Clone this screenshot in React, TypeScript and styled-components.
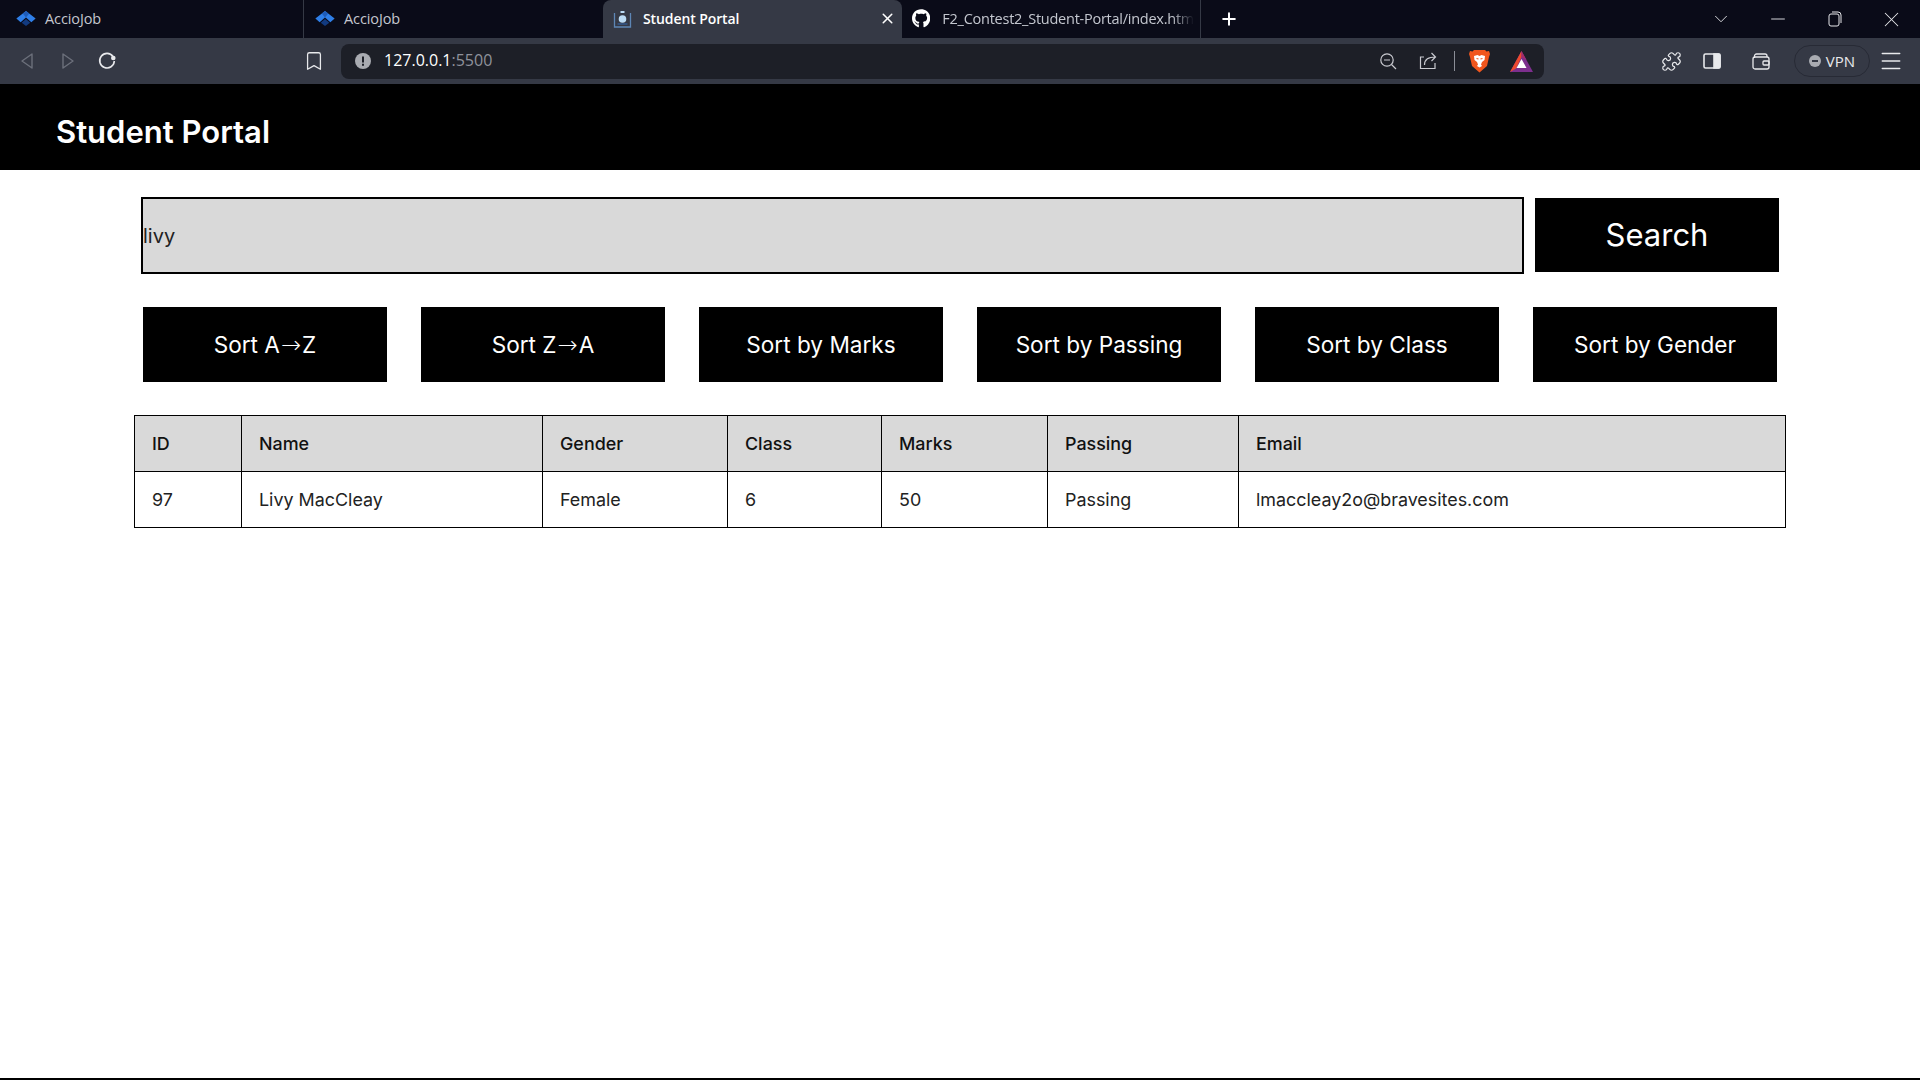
import React from 'react';
import styled, { createGlobalStyle } from 'styled-components';
import { FaGithub } from 'react-icons/fa';
import { Bookmark, ChevronDown, Menu, Minus, Plus, Puzzle, X } from 'lucide-react';

const GlobalStyle = createGlobalStyle`
  * {
    box-sizing: border-box;
  }
  body {
    margin: 0;
    background: #fff;
    font-family: 'Inter', sans-serif;
  }
`;

const Page = styled.div`
  display: flex;
  flex-direction: column;
  height: 1080px;
  overflow: hidden;
  border-bottom: 2px solid #000;
`;

/* browser chrome */
const TabStrip = styled.div`
  display: flex;
  align-items: stretch;
  height: 38px;
  background: #0a0b18;
  font-family: 'Open Sans', sans-serif;
  font-size: 14.5px;
`;

const Tab = styled.div<{
  $active?: boolean;
  $width: number;
  $inset: number;
  $gap: number;
  $divider?: boolean;
}>`
  display: flex;
  align-items: center;
  gap: ${(p) => p.$gap}px;
  width: ${(p) => p.$width}px;
  padding: 0 6px 1px ${(p) => p.$inset}px;
  color: ${(p) => (p.$active ? '#fff' : '#c4c7cf')};
  font-size: ${(p) => (p.$active ? '14px' : '14.5px')};
  font-weight: ${(p) => (p.$active ? 600 : 400)};
  background: ${(p) => (p.$active ? '#353945' : 'transparent')};
  border-radius: ${(p) => (p.$active ? '8px 8px 0 0' : '0')};
  border-right: ${(p) => (p.$divider ? '1px solid #353945' : 'none')};
  white-space: nowrap;
  overflow: hidden;
`;

const TabTitle = styled.span<{ $fade?: boolean }>`
  flex: 1;
  letter-spacing: ${(p) => (p.$fade ? '-0.25px' : '-0.1px')};
  ${(p) =>
    p.$fade &&
    'mask-image: linear-gradient(to right, #000 calc(100% - 22px), transparent);'}
`;

const NewTab = styled.div`
  display: flex;
  align-items: center;
  padding-left: 18px;
  color: #fff;
`;

const WindowControls = styled.div`
  display: flex;
  margin-left: auto;
  color: #e6e7ea;
`;

const WindowButton = styled.div`
  display: flex;
  align-items: center;
  justify-content: center;
  width: 57px;
`;

const Toolbar = styled.div`
  display: flex;
  align-items: center;
  height: 46px;
  background: #353945;
  color: #e8e9ec;
`;

const NavGroup = styled.div`
  display: flex;
  align-items: center;
  width: 303px;
  padding-left: 20px;
`;

const BookmarkSlot = styled.div`
  display: flex;
  width: 38px;
`;

const AddressBar = styled.div`
  display: flex;
  align-items: center;
  width: 1203px;
  height: 35px;
  padding: 0 11px 0 14px;
  border-radius: 8px;
  background: #1d1f27;
  font-family: 'Open Sans', sans-serif;
  font-size: 16px;
`;

const UrlHost = styled.span`
  margin-left: 13px;
  padding-bottom: 2px;
  color: #fff;
`;

const UrlPort = styled.span`
  padding-bottom: 2px;
  color: #8f929b;
`;

const AddressActions = styled.div`
  display: flex;
  align-items: center;
  margin-left: auto;
`;

const Slot = styled.div<{ $gap?: number }>`
  display: flex;
  margin-right: ${(p) => p.$gap ?? 0}px;
`;

const Separator = styled.div`
  width: 1px;
  height: 20px;
  margin-right: 14px;
  background: #8b8e97;
`;

const ToolbarRight = styled.div`
  display: flex;
  align-items: center;
  flex: 1;
  padding-left: 117px;
`;

const VpnPill = styled.div`
  display: flex;
  align-items: center;
  justify-content: center;
  gap: 5px;
  width: 76px;
  height: 32px;
  margin-right: 8px;
  padding-bottom: 1px;
  border: 1px solid #272a35;
  border-radius: 16px;
  font-family: 'Open Sans', sans-serif;
  font-size: 15px;
`;

/* page content */
const Header = styled.header`
  display: flex;
  align-items: center;
  height: 86px;
  padding: 9px 0 0 56px;
  background: #000;
  color: #fff;
  font-size: 31px;
  font-weight: 600;
`;

const Content = styled.main`
  display: flex;
  flex-direction: column;
  padding: 27px 135px 0 134px;
`;

const SearchRow = styled.div`
  display: flex;
  align-items: center;
  gap: 11px;
  padding-left: 7px;
`;

const SearchInput = styled.input`
  width: 1383px;
  height: 77px;
  padding: 0;
  border: 2px solid #000;
  background: #d9d9d9;
  color: #222;
  font-family: 'Inter', sans-serif;
  font-size: 20px;
  outline: none;
`;

const SearchButton = styled.button`
  width: 244px;
  height: 74px;
  margin-bottom: 2px;
  border: none;
  background: #000;
  color: #fff;
  font-family: 'Inter', sans-serif;
  font-size: 31px;
`;

const SortRow = styled.div`
  display: flex;
  gap: 34px;
  margin-top: 33px;
  padding-left: 9px;
`;

const SortButton = styled.button`
  width: 244px;
  height: 75px;
  border: none;
  background: #000;
  color: #fff;
  font-family: 'Inter', sans-serif;
  font-size: 22.6px;
`;

const Arrow = styled.span`
  margin: 0 1px;
  font-family: 'DejaVu Sans', sans-serif;
  font-size: 24px;
  font-weight: 200;
  line-height: 0;
`;

const StudentTable = styled.table`
  width: 1651px;
  margin-top: 33px;
  border-collapse: collapse;
  table-layout: fixed;
  font-size: 17.9px;
  color: #222;
`;

const Th = styled.th`
  height: 56px;
  padding: 0 17px;
  border: 1px solid #000;
  background: #d9d9d9;
  color: #111;
  text-align: left;
  font-weight: 500;
`;

const Td = styled.td`
  height: 56px;
  padding: 0 17px;
  border: 1px solid #000;
`;

const Icon = styled.svg.attrs({ fill: 'none', stroke: 'currentColor' })`
  display: block;
  flex-shrink: 0;
`;

const AccioLogo = () => (
  <svg width="20" height="15" viewBox="0 0 18 14">
    <path d="M9 7.500l4 3.500-4 3-4-3z" fill="#123a80" />
    <path d="M9 0l9 7-4 3.500-5-4.500-5 4.500-4-3.500z" fill="#2f7fe8" />
    <path d="M9 0l3 2.300L9 6 6 2.300z" fill="#1f5cb8" />
  </svg>
);

const PortalLogo = () => (
  <svg width="21" height="22" viewBox="0 0 20 22" fill="none">
    <path d="M2 5v14h16V5" stroke="#5d86b5" strokeWidth="1.3" />
    <path d="M8 3h4v2H8z" fill="#bcdcf5" />
    <circle cx="10" cy="11" r="3.800" fill="#bcdcf5" />
    <path d="M5 15h10v2H5z" fill="#33507a" />
  </svg>
);

const BraveLogo = () => (
  <svg width="21" height="24" viewBox="0 0 21 24">
    <path d="M5 1h11l1.500 1.500L20 2l1 3-1 3-2 9-7.500 6.500L3 17 1 8 0 5l1-3 2.500.5z" fill="#f1561d" />
    <path d="M5 7l3.500-1 2 1 2-1L16 7l-.5 4-2.500 2-1 2.500 1 1.500-2.500 1.500L8 17l1-1.500L8 13l-2.500-2z" fill="#fff" />
    <path d="M7.500 9.500L9.500 10M13.500 9.500L11.500 10" stroke="#f1561d" strokeWidth="1.2" />
  </svg>
);

const BatLogo = () => (
  <svg width="23" height="21" viewBox="0 0 23 21">
    <path d="M11.500 0L23 21H0z" fill="#7d2f8e" />
    <path d="M11.500 0L0 21l6-3.500L11.500 6z" fill="#ee4a2e" />
    <path d="M11.500 0l5 9-5-3z" fill="#a32c6a" />
    <path d="M11.500 8l5 9h-10z" fill="#fff" />
  </svg>
);

const columns = [
  { label: 'ID', width: 107, value: '97' },
  { label: 'Name', width: 301, value: 'Livy MacCleay' },
  { label: 'Gender', width: 185, value: 'Female' },
  { label: 'Class', width: 154, value: '6' },
  { label: 'Marks', width: 166, value: '50' },
  { label: 'Passing', width: 191, value: 'Passing' },
  { label: 'Email', width: 547, value: 'lmaccleay2o@bravesites.com' },
];

const sortLabels = [
  ['Sort A', 'Z'],
  ['Sort Z', 'A'],
  ['Sort by Marks'],
  ['Sort by Passing'],
  ['Sort by Class'],
  ['Sort by Gender'],
];

const App = () => {
  return (
    <Page>
      <GlobalStyle />
      <TabStrip>
        <Tab $width={304} $inset={16} $gap={9} $divider>
          <AccioLogo />
          <TabTitle>AccioJob</TabTitle>
        </Tab>
        <Tab $width={299} $inset={11} $gap={9}>
          <AccioLogo />
          <TabTitle>AccioJob</TabTitle>
        </Tab>
        <Tab $active $width={299} $inset={9} $gap={10}>
          <PortalLogo />
          <TabTitle>Student Portal</TabTitle>
          <X size={17} strokeWidth={2.2} />
        </Tab>
        <Tab $width={299} $inset={10} $gap={12} $divider>
          <FaGithub size={23} color="#fff" />
          <TabTitle $fade>F2_Contest2_Student-Portal/index.htm</TabTitle>
        </Tab>
        <NewTab>
          <Plus size={20} strokeWidth={2.4} />
        </NewTab>
        <WindowControls>
          <WindowButton>
            <ChevronDown size={22} strokeWidth={1} />
          </WindowButton>
          <WindowButton>
            <Minus size={22} strokeWidth={1} />
          </WindowButton>
          <WindowButton>
            <Icon width="14" height="16" viewBox="0 0 14 16">
              <rect x="1" y="3" width="10" height="12" rx="2" />
              <path d="M4 1h6a3 3 0 0 1 3 3v8" />
            </Icon>
          </WindowButton>
          <WindowButton>
            <X size={25} strokeWidth={1} />
          </WindowButton>
        </WindowControls>
      </TabStrip>
      <Toolbar>
        <NavGroup>
          <Slot $gap={27}>
            <Icon width="14" height="18" viewBox="0 0 14 18" color="#6c707b" strokeWidth="1.4">
              <path d="M12 2L2 9l10 7z" strokeLinejoin="round" />
            </Icon>
          </Slot>
          <Slot $gap={23}>
            <Icon width="14" height="18" viewBox="0 0 14 18" color="#6c707b" strokeWidth="1.4">
              <path d="M2 2l10 7-10 7z" strokeLinejoin="round" />
            </Icon>
          </Slot>
          <Icon width="18" height="18" viewBox="0 0 18 18" strokeWidth="1.6">
            <path d="M15 4.500A7.300 7.300 0 1 0 16.300 9" />
            <circle cx="15.300" cy="6" r="1.500" fill="currentColor" />
          </Icon>
        </NavGroup>
        <BookmarkSlot>
          <Bookmark size={22} strokeWidth={1.4} />
        </BookmarkSlot>
        <AddressBar>
          <svg width="16" height="16" viewBox="0 0 16 16">
            <circle cx="8" cy="8" r="8" fill="#a9abb1" />
            <path d="M7 3.500h2v6H7zM7 10.700h2v2H7z" fill="#1d1f27" />
          </svg>
          <UrlHost>127.0.0.1</UrlHost>
          <UrlPort>:5500</UrlPort>
          <AddressActions>
            <Slot $gap={22}>
              <Icon width="18" height="18" viewBox="0 0 18 18" strokeWidth="1.2" color="#c9cad0">
                <circle cx="8" cy="8" r="6.200" />
                <path d="M5 8h6M12.500 12.500l4.500 4.500" />
              </Icon>
            </Slot>
            <Slot $gap={17}>
              <Icon width="18" height="18" viewBox="0 0 18 18" strokeWidth="1.2" color="#c9cad0">
                <path d="M5 5H1.500v11.500H16V11" />
                <path d="M5.500 13c0-6 4-8 11-8M12.500 1l4 4-4 4" />
              </Icon>
            </Slot>
            <Separator />
            <Slot $gap={20}>
              <BraveLogo />
            </Slot>
            <BatLogo />
          </AddressActions>
        </AddressBar>
        <ToolbarRight>
          <Slot $gap={21}>
            <Puzzle size={21} strokeWidth={1.4} />
          </Slot>
          <Slot $gap={31}>
            <Icon width="18" height="16" viewBox="0 0 18 16" strokeWidth="1.6">
              <rect x="1" y="1" width="16" height="14" rx="1.500" />
              <path d="M11 1h4.500A1.500 1.500 0 0 1 17 2.500v11a1.500 1.500 0 0 1-1.500 1.500H11z" fill="currentColor" />
            </Icon>
          </Slot>
          <Slot $gap={24}>
            <Icon width="18" height="17" viewBox="0 0 18 17" strokeWidth="1.3">
              <path d="M2.500 5V3a2 2 0 0 1 2-2H13a2 2 0 0 1 2 2v1" />
              <rect x="1" y="4" width="16" height="12" rx="2" />
              <rect x="11" y="8" width="6" height="4" rx="1" />
            </Icon>
          </Slot>
          <VpnPill>
            <svg width="12" height="12" viewBox="0 0 12 12">
              <circle cx="6" cy="6" r="6" fill="#a9abb1" />
              <path d="M3 5h6v2H3z" fill="#353945" />
            </svg>
            VPN
          </VpnPill>
          <Menu size={26} strokeWidth={1.4} />
        </ToolbarRight>
      </Toolbar>

      <Header>Student Portal</Header>
      <Content>
        <SearchRow>
          <SearchInput defaultValue="livy" />
          <SearchButton>Search</SearchButton>
        </SearchRow>
        <SortRow>
          {sortLabels.map(([from, to]) => (
            <SortButton key={from}>
              {from}
              {to && <Arrow>→</Arrow>}
              {to}
            </SortButton>
          ))}
        </SortRow>
        <StudentTable>
          <colgroup>
            {columns.map((col) => (
              <col key={col.label} width={col.width} />
            ))}
          </colgroup>
          <thead>
            <tr>
              {columns.map((col) => (
                <Th key={col.label}>{col.label}</Th>
              ))}
            </tr>
          </thead>
          <tbody>
            <tr>
              {columns.map((col) => (
                <Td key={col.label}>{col.value}</Td>
              ))}
            </tr>
          </tbody>
        </StudentTable>
      </Content>
    </Page>
  );
};

export default App;
